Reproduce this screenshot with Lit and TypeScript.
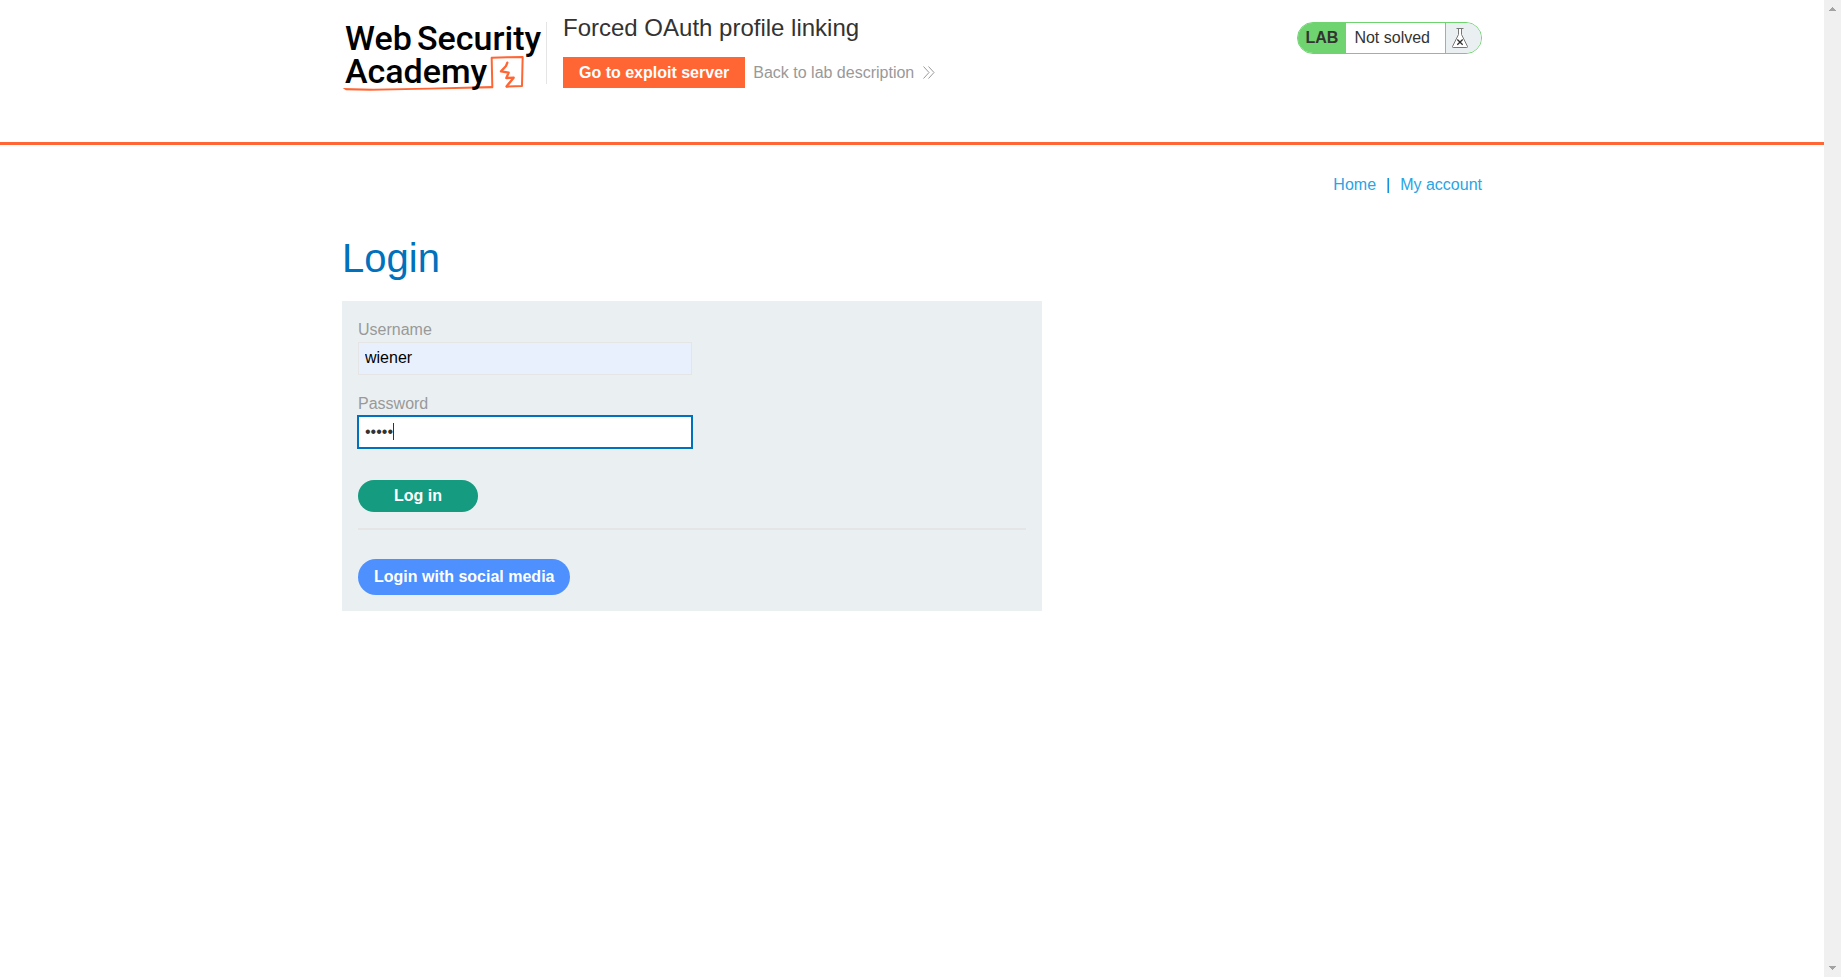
import { LitElement, html, css } from "lit";
import { customElement, query } from "lit/decorators.js";

@customElement("academy-logo")
class AcademyLogo extends LitElement {
  static styles = css`
    :host { display: block; }
    svg { display: block; }
    text { font: 500 34px Roboto, sans-serif; fill: #000; }
  `;
  render() {
    return html`
      <svg width="204" height="84" viewBox="0 0 204 84" role="img" aria-label="Web Security Academy">
        <text x="3" y="36">Web</text>
        <text x="75" y="36">Security</text>
        <g transform="translate(-12 -4) scale(0.33333)" fill="none" stroke="#ff6633" stroke-linecap="round" stroke-linejoin="round">
          <path d="M38 234 L130 236 L300 233 L486 228 L487 235 L330 238 L120 242 L48 241 Z" fill="#ff6633" stroke="none" />
          <path d="M487 232 L485 143 L532 142 L578 141 L576 228 L530 230" stroke-width="6" />
          <path d="M532 158 L528 168 L513 184 L536 188 L529 204 L551 203 L530 229" stroke-width="7" />
        </g>
        <text x="3" y="69">Academy</text>
      </svg>
    `;
  }
}

@customElement("lab-status")
class LabStatus extends LitElement {
  static styles = css`
    :host { display: block; }
    .pill {
      box-sizing: border-box;
      display: flex;
      height: 32px;
      border: 1px solid #6fd36f;
      border-radius: 16px;
      overflow: hidden;
      background: #fff;
      font-size: 16px;
      line-height: 30px;
      color: #333332;
    }
    .tag { padding: 0 8px; font-weight: bold; background: #6fd36f; }
    .state { padding: 0 15px 0 8px; border-right: 1px solid #6fd36f; }
    .flask { display: flex; align-items: center; padding: 0 12px 0 5px; background: #eaf0f2; }
    svg { display: block; }
  `;
  render() {
    return html`
      <div class="pill">
        <span class="tag">LAB</span>
        <span class="state">Not solved</span>
        <span class="flask">
          <svg width="18" height="22" viewBox="0 0 18 22" fill="none" stroke="#777" aria-hidden="true">
            <path d="M5.5 1.5 H12.5" />
            <path d="M7.5 2 V7.5 L1.5 19.5 Q1.3 20.5 2.2 20.5 H15.8 Q16.7 20.5 16.5 19.5 L10.5 7.5 V2" fill="#fff" />
            <path d="M6.3 12.5 L11.7 17.7 M11.7 12.5 L6.3 17.7" stroke="#333" stroke-width="1.3" />
          </svg>
        </span>
      </div>
    `;
  }
}

@customElement("login-form")
class LoginForm extends LitElement {
  @query("#password") password!: HTMLInputElement;

  static styles = css`
    :host { display: block; }
    section {
      box-sizing: border-box;
      max-width: 700px;
      padding: 16px;
      background: #eaf0f2;
    }
    form { display: flex; flex-direction: column; align-items: flex-start; }
    label { color: #999; font-size: 16px; line-height: 25px; }
    .field { position: relative; width: 50%; margin-bottom: 16px; }
    .field.last { margin-bottom: 32px; }
    input {
      box-sizing: border-box;
      display: block;
      width: 100%;
      height: 33px;
      margin: 0;
      padding: 0 6px 1px;
      border: 1px solid #e5e5e5;
      border-radius: 0;
      outline: none;
      background: #fff;
      color: #333332;
      font: 16px "Liberation Sans", Arial, sans-serif;
    }
    .filled { background: #e8f0fe; color: #000; }
    .active {
      height: 32px;
      border-color: #0071bc;
      outline: 1px solid #0071bc;
      caret-color: transparent;
    }
    .caret {
      position: absolute;
      top: 7px;
      left: 35px;
      width: 1px;
      height: 17px;
      background: #333332;
      pointer-events: none;
    }
    button, .social {
      border: 0;
      color: #fff;
      font: bold 16px "Liberation Sans", Arial, sans-serif;
      text-decoration: none;
      cursor: pointer;
    }
    button { width: 120px; height: 32px; padding: 0; border-radius: 16px; background: #159b80; }
    hr { height: 2px; margin: 16px 0 29px; border: 0; background: #e5e5e5; }
    .social {
      display: block;
      width: fit-content;
      padding: 0 16px;
      border-radius: 18px;
      background: #4d90fe;
      line-height: 36px;
    }
  `;

  firstUpdated() {
    this.password.focus();
    this.password.setSelectionRange(5, 5);
  }

  render() {
    return html`
      <section>
        <form @submit=${(e: Event) => e.preventDefault()}>
          <label for="username">Username</label>
          <div class="field">
            <input id="username" class="filled" type="text" value="wiener" />
          </div>
          <label for="password">Password</label>
          <div class="field last">
            <input id="password" class="active" type="password" value="peter" />
            <span class="caret"></span>
          </div>
          <button type="submit">Log in</button>
        </form>
        <hr />
        <a class="social" href="#social">Login with social media</a>
      </section>
    `;
  }
}

@customElement("app-root")
class AppRoot extends LitElement {
  static styles = css`
    :host {
      display: flex;
      min-height: 100vh;
      background: #fff;
      color: #333332;
      font: 16px "Liberation Sans", Arial, sans-serif;
    }
    .page { flex: 1; min-width: 0; }
    .container { box-sizing: border-box; max-width: 1140px; margin: 0 auto; }
    header { border-bottom: 3px solid #ff6633; }
    .banner { display: flex; align-items: flex-start; padding: 14px 0 44px; }
    .divider { width: 1px; height: 62px; margin: 8px 16px 0 0; background: #e5e5e5; }
    .info { flex: 1; }
    h2 { margin: 0 0 15px; font-size: 24px; font-weight: normal; line-height: 28px; }
    .actions { display: flex; align-items: center; gap: 8px; }
    .exploit {
      padding: 0 16px;
      background: #ff6633;
      color: #fff;
      font-weight: bold;
      line-height: 31px;
      text-decoration: none;
    }
    .back { display: flex; align-items: center; gap: 9px; color: #999; text-decoration: none; line-height: 31px; }
    .status { margin-top: 8px; }
    nav { display: flex; justify-content: flex-end; gap: 10px; padding-top: 28px; line-height: 24px; color: #0071bc; }
    nav a { color: #29a4e4; text-decoration: none; }
    h1 { margin: 38px 0 20px; color: #0071bc; font-size: 40px; font-weight: normal; line-height: 46px; }
    .scrollbar {
      position: sticky;
      top: 0;
      box-sizing: border-box;
      display: flex;
      flex-direction: column;
      justify-content: space-between;
      align-items: center;
      width: 17px;
      height: 100vh;
      padding: 7px 0;
      background: #f0f0f0;
    }
    .scrollbar svg { display: block; }
  `;

  render() {
    return html`
      <div class="page">
        <header>
          <div class="container banner">
            <academy-logo></academy-logo>
            <div class="divider"></div>
            <div class="info">
              <h2>Forced OAuth profile linking</h2>
              <div class="actions">
                <a class="exploit" href="#exploit">Go to exploit server</a>
                <a class="back" href="#lab">
                  Back to lab description
                  <svg width="12" height="13" viewBox="0 0 12 13" fill="none" stroke="#999" aria-hidden="true">
                    <path d="M0.5 0.5 L6 6.5 L0.5 12.5 M5.5 0.5 L11 6.5 L5.5 12.5" />
                  </svg>
                </a>
              </div>
            </div>
            <lab-status class="status"></lab-status>
          </div>
        </header>
        <main class="container">
          <nav>
            <a href="#home">Home</a><span>|</span><a href="#account">My account</a>
          </nav>
          <h1>Login</h1>
          <login-form></login-form>
        </main>
      </div>
      <div class="scrollbar" aria-hidden="true">
        <svg width="7" height="4" viewBox="0 0 7 4" fill="#a3a3a3" shape-rendering="crispEdges">
          <path d="M3 0h1v1h1v1h1v1h1v1H0V3h1V2h1V1h1z" />
        </svg>
        <svg width="7" height="4" viewBox="0 0 7 4" fill="#a3a3a3" shape-rendering="crispEdges">
          <path d="M0 0h7v1H6v1H5v1H4v1H3V3H2V2H1V1H0z" />
        </svg>
      </div>
    `;
  }
}
